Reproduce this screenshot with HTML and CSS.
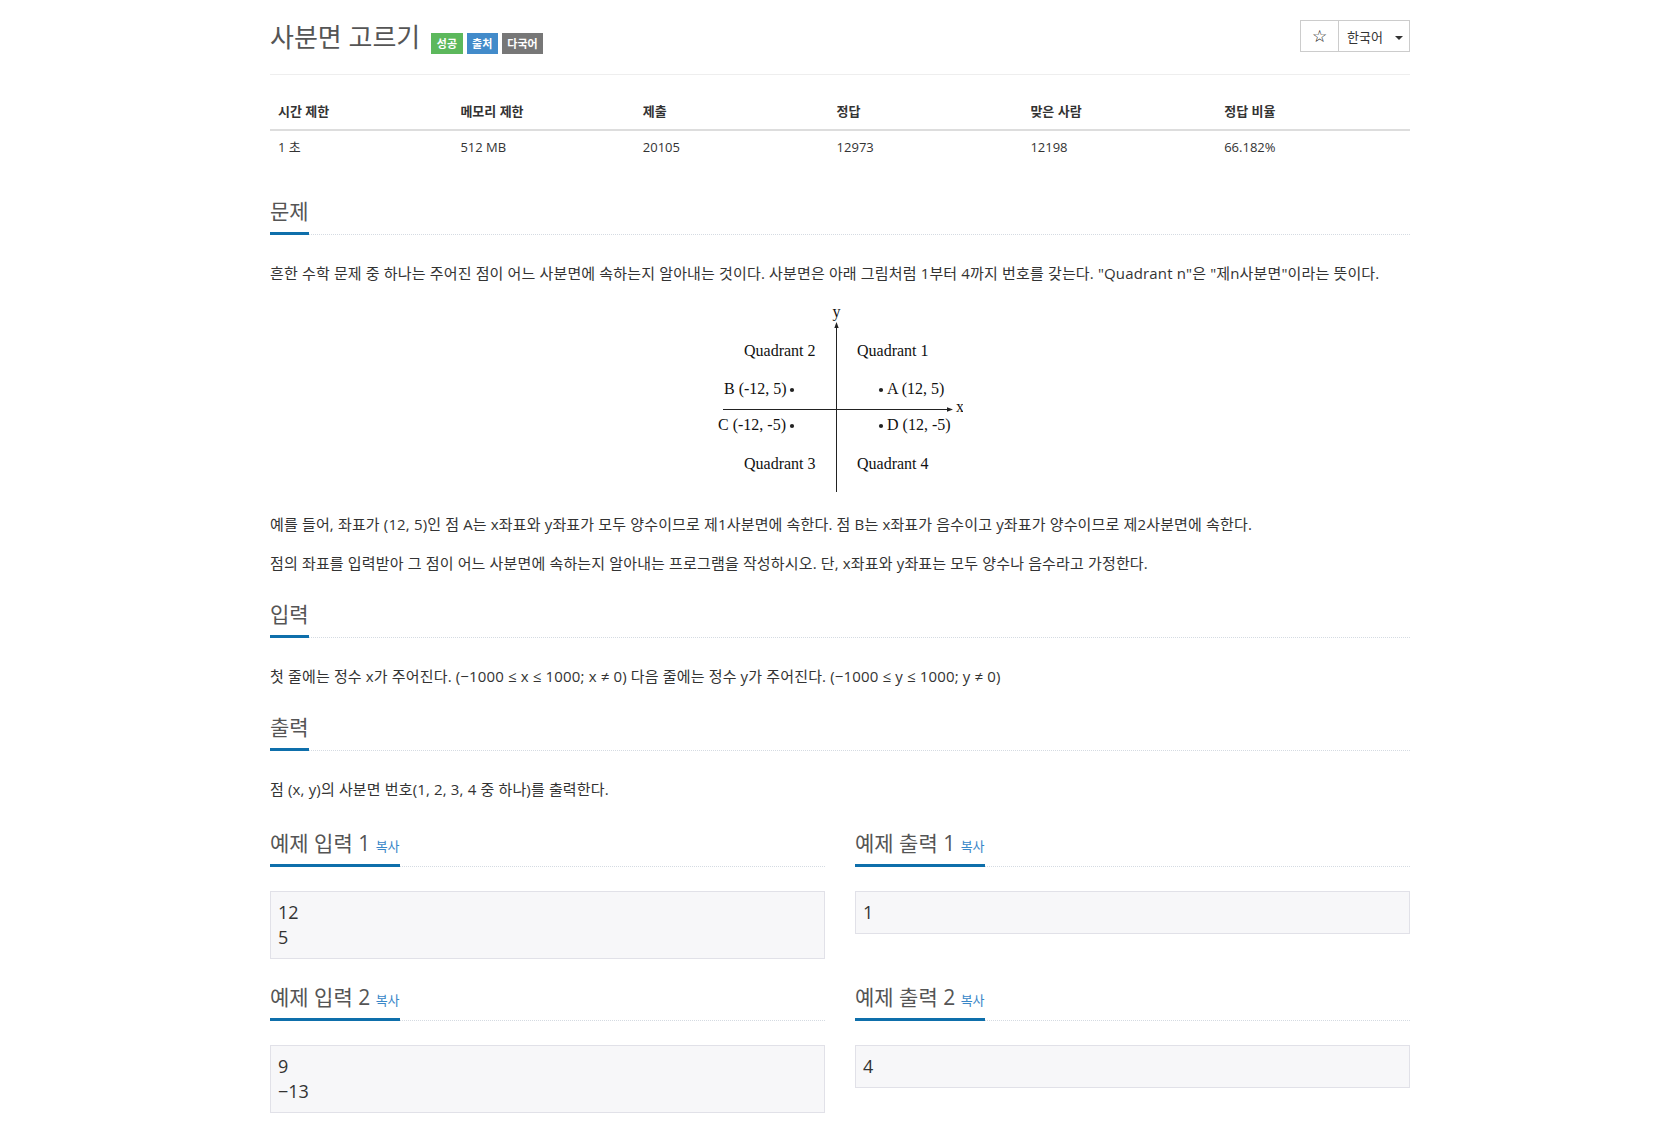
FILE: index.html
```html
<!DOCTYPE html>
<html lang="ko">
<head>
<meta charset="utf-8">
<title>사분면 고르기</title>
<link rel="stylesheet" href="styles.css">
</head>
<body>
<div class="container">
  <div class="page-header">
    <div class="title-wrap">
      <h1 class="title">사분면 고르기</h1>
      <div class="labels">
        <span class="label label-success">성공</span>
        <span class="label label-primary">출처</span>
        <span class="label label-default">다국어</span>
      </div>
    </div>
    <div class="btn-group">
      <button class="btn btn-star" type="button">☆</button>
      <button class="btn btn-lang" type="button">한국어 <span class="caret"></span></button>
    </div>
  </div>

  <table class="info-table">
    <thead>
      <tr>
        <th class="w16">시간 제한</th>
        <th class="w16">메모리 제한</th>
        <th class="w17">제출</th>
        <th class="w17">정답</th>
        <th class="w17">맞은 사람</th>
        <th class="w17">정답 비율</th>
      </tr>
    </thead>
    <tbody>
      <tr>
        <td>1 초</td>
        <td>512 MB</td>
        <td>20105</td>
        <td>12973</td>
        <td>12198</td>
        <td>66.182%</td>
      </tr>
    </tbody>
  </table>

  <section class="section first">
    <div class="headline"><h2>문제</h2></div>
    <div class="problem-text">
      <p>흔한 수학 문제 중 하나는 주어진 점이 어느 사분면에 속하는지 알아내는 것이다. 사분면은 아래 그림처럼 1부터 4까지 번호를 갖는다. "Quadrant n"은 "제n사분면"이라는 뜻이다.</p>
      <div class="figure">
        <svg width="246" height="188" viewBox="0 0 246 188" xmlns="http://www.w3.org/2000/svg">
          <g stroke="#222" stroke-width="1" fill="none">
            <line x1="119.5" y1="21" x2="119.5" y2="188"/>
            <line x1="6" y1="105.5" x2="233" y2="105.5"/>
          </g>
          <g fill="#222">
            <polygon points="119.5,18 117.3,24 121.7,24"/>
            <polygon points="236,105.5 230,103.3 230,107.7"/>
            <circle cx="75" cy="86" r="2.1"/>
            <circle cx="164" cy="86" r="2.1"/>
            <circle cx="75" cy="122" r="2.1"/>
            <circle cx="164" cy="122" r="2.1"/>
          </g>
          <g class="fig-text">
            <text x="119.5" y="12.5" text-anchor="middle">y</text>
            <text x="239" y="108">x</text>
            <text x="27" y="52">Quadrant 2</text>
            <text x="140" y="52">Quadrant 1</text>
            <text x="7" y="90">B (-12, 5)</text>
            <text x="170" y="90">A (12, 5)</text>
            <text x="1" y="126">C (-12, -5)</text>
            <text x="170" y="126">D (12, -5)</text>
            <text x="27" y="165">Quadrant 3</text>
            <text x="140" y="165">Quadrant 4</text>
          </g>
        </svg>
      </div>
      <p>예를 들어, 좌표가 (12, 5)인 점 A는 x좌표와 y좌표가 모두 양수이므로 제1사분면에 속한다. 점 B는 x좌표가 음수이고 y좌표가 양수이므로 제2사분면에 속한다.</p>
      <p>점의 좌표를 입력받아 그 점이 어느 사분면에 속하는지 알아내는 프로그램을 작성하시오. 단, x좌표와 y좌표는 모두 양수나 음수라고 가정한다.</p>
    </div>
  </section>

  <section class="section">
    <div class="headline"><h2>입력</h2></div>
    <div class="problem-text">
      <p>첫 줄에는 정수 x가 주어진다. (−1000 ≤ x ≤ 1000; x ≠ 0) 다음 줄에는 정수 y가 주어진다. (−1000 ≤ y ≤ 1000; y ≠ 0)</p>
    </div>
  </section>

  <section class="section">
    <div class="headline"><h2>출력</h2></div>
    <div class="problem-text">
      <p>점 (x, y)의 사분면 번호(1, 2, 3, 4 중 하나)를 출력한다.</p>
    </div>
  </section>

  <div class="samples">
    <div class="sample">
      <div class="headline"><h2>예제 입력 1 <a class="copy" href="#">복사</a></h2></div>
      <pre class="sample-data">12
5</pre>
    </div>
    <div class="sample">
      <div class="headline"><h2>예제 출력 1 <a class="copy" href="#">복사</a></h2></div>
      <pre class="sample-data">1</pre>
    </div>
    <div class="sample">
      <div class="headline"><h2>예제 입력 2 <a class="copy" href="#">복사</a></h2></div>
      <pre class="sample-data">9
−13</pre>
    </div>
    <div class="sample">
      <div class="headline"><h2>예제 출력 2 <a class="copy" href="#">복사</a></h2></div>
      <pre class="sample-data">4</pre>
    </div>
  </div>
</div>
</body>
</html>
```
FILE: styles.css
```css
* { box-sizing: border-box; }

html, body {
  margin: 0;
  padding: 0;
  background: #fff;
}

body {
  font-family: "Open Sans", "Noto Sans CJK KR", sans-serif;
  color: #333;
  font-size: 13px;
}

.container {
  width: 1140px;
  margin: 0 auto;
  padding-top: 18px;
  padding-bottom: 20px;
}

/* header */
.page-header {
  display: flex;
  align-items: center;
  justify-content: space-between;
  height: 57px;
  padding-bottom: 18px;
  border-bottom: 1px solid #eee;
}

.title-wrap {
  display: flex;
  align-items: center;
}

.title {
  margin: 0;
  font-size: 26px;
  font-weight: 400;
  line-height: 38px;
  color: #555;
}

.labels {
  display: flex;
  gap: 4px;
  margin-left: 11px;
  margin-top: 12px;
}

.label {
  display: inline-block;
  height: 21px;
  line-height: 21px;
  padding: 0 5.5px;
  font-size: 11px;
  font-weight: 700;
  color: #fff;
}

.label-success { background: #5cb85c; }
.label-primary { background: #428bca; }
.label-default { background: #777; }

.btn-group {
  display: flex;
  margin-top: -2px;
}

.btn {
  height: 32px;
  background: #fff;
  border: 1px solid #ccc;
  color: #333;
  font-family: "Open Sans", "Noto Sans CJK KR", sans-serif;
  font-size: 13px;
  padding: 0;
  margin: 0;
}

.btn-star {
  width: 39px;
  font-family: "DejaVu Sans", sans-serif;
  font-size: 17px;
  color: #111;
  font-weight: 700;
}

.btn-lang {
  width: 72px;
  margin-left: -1px;
  text-align: left;
  padding-left: 8px;
}

.caret {
  display: inline-block;
  width: 0;
  height: 0;
  margin-left: 9px;
  vertical-align: middle;
  border-top: 4px solid #333;
  border-left: 4px solid transparent;
  border-right: 4px solid transparent;
}

/* info table */
.info-table {
  width: 100%;
  margin-top: 17px;
  border-collapse: collapse;
  font-size: 13px;
}

.info-table th {
  text-align: left;
  font-weight: 700;
  padding: 9px 8px 8px;
  line-height: 20px;
  border-bottom: 2px solid #ddd;
}

.info-table td {
  padding: 6px 8px;
  line-height: 20px;
}

.w16 { width: 16%; }
.w17 { width: 17%; }

/* sections */
.section {
  margin-top: 25px;
}

.section.first {
  margin-top: 34px;
}

.headline {
  border-bottom: 1px dotted #d5dbe2;
}

.headline h2 {
  display: inline-block;
  margin: 0 0 -1px;
  padding-bottom: 7px;
  font-size: 21px;
  line-height: 28px;
  font-weight: 400;
  color: #555;
  border-bottom: 3px solid #0e6fab;
}

.problem-text {
  margin-top: 26px;
  font-size: 15px;
  letter-spacing: 0.15px;
}

.problem-text p {
  margin: 0 0 15px;
  line-height: 24px;
}

.problem-text p:last-child {
  margin-bottom: 0;
}

.figure {
  display: flex;
  justify-content: center;
  margin: 19px 0 20px;
}

.figure svg {
  display: block;
}

.fig-text text {
  font-family: "Liberation Serif", "Times New Roman", serif;
  font-size: 16px;
  fill: #111;
  letter-spacing: 0;
}

/* samples */
.samples {
  display: grid;
  grid-template-columns: 1fr 1fr;
  column-gap: 30px;
  row-gap: 24px;
  margin-top: 28px;
}

.copy {
  font-size: 13px;
  line-height: 1;
  color: #3a87c8;
  text-decoration: none;
}

.sample-data {
  margin: 24px 0 0;
  padding: 8px 7px;
  background: #f7f7f9;
  border: 1px solid #e1e1e8;
  font-family: "Open Sans", "Noto Sans CJK KR", sans-serif;
  font-size: 18px;
  line-height: 25px;
  color: #333;
  white-space: pre;
}
```
